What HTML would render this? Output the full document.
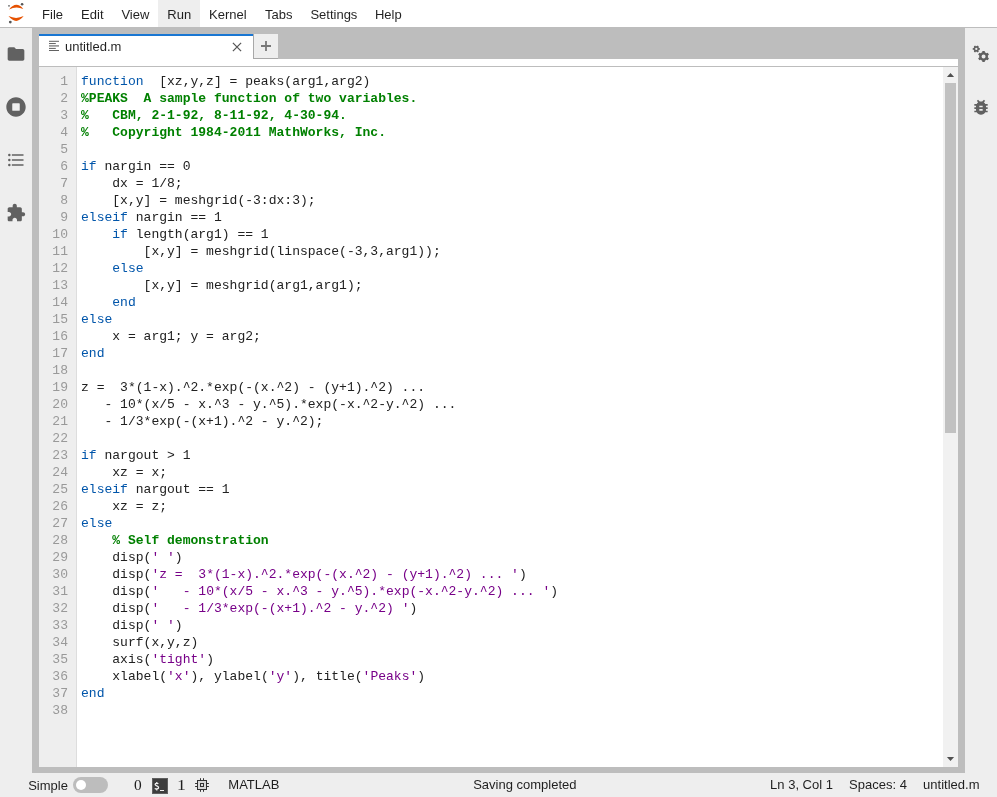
<!DOCTYPE html>
<html>
<head>
<meta charset="utf-8">
<style>
html,body{margin:0;padding:0;}
body{width:997px;height:797px;overflow:hidden;position:relative;will-change:transform;background:#eeeeee;font-family:"Liberation Sans",sans-serif;font-size:13px;color:#212121;}
.abs{position:absolute;}
#top{left:0;top:0;width:997px;height:27px;background:#ffffff;border-bottom:1px solid #bdbdbd;}
.mi{position:absolute;top:1px;height:27px;line-height:27px;font-size:13px;color:rgba(0,0,0,0.87);white-space:nowrap;}
#runbg{left:158px;top:0;width:42px;height:27px;background:#eeeeee;}
#lsb{left:0;top:28px;width:32px;height:745px;background:#eeeeee;}
#main{left:32px;top:28px;width:933px;height:745px;background:#bdbdbd;}
#rsb{left:965px;top:28px;width:32px;height:745px;background:#eeeeee;}
#status{left:0;top:773px;width:997px;height:24px;background:#eeeeee;}
.st{position:absolute;top:1px;height:24px;line-height:24px;font-size:13px;color:rgba(0,0,0,0.87);white-space:nowrap;}
#tab{left:39px;top:34px;width:214px;height:25px;background:#ffffff;}
#tabblue{left:39px;top:34px;width:214px;height:2px;background:#1976d2;}
#plus{left:253px;top:34px;width:24px;height:24px;background:#eeeeee;border-left:1px solid #a8a8a8;border-bottom:1px solid #a8a8a8;}
#toolbar{left:39px;top:59px;width:919px;height:7px;background:#ffffff;border-bottom:1px solid #bdbdbd;}
#editor{left:39px;top:67px;width:919px;height:700px;background:#ffffff;overflow:hidden;}
#gutter{left:0;top:0;width:37px;height:700px;background:#eeeeee;border-right:1px solid #dddddd;}
#sb{left:904px;top:0;width:15px;height:700px;background:#f1f1f1;}
#thumb{left:2px;top:16px;width:11px;height:350px;background:#c1c1c1;}
.ln{position:absolute;left:0;width:29px;text-align:right;height:17px;line-height:17px;font-family:"Liberation Mono",monospace;font-size:13.04px;color:#999999;}
#code{position:absolute;left:42px;top:6px;font-family:"Liberation Mono",monospace;font-size:13.04px;line-height:17px;color:#212121;white-space:normal;}
#code div{height:17px;white-space:pre;}
.k{color:#0055aa;}
.c{color:#008000;font-weight:bold;}
.s{color:#770088;}
svg{position:absolute;overflow:visible;}
</style>
</head>
<body>
<div id="top" class="abs">
  <div id="runbg" class="abs"></div>
  <svg style="left:0;top:0" width="32" height="27" viewBox="0 0 32 27">
    <path d="M9.1 9.4 Q16.2 0.4 23.3 9.0 Q16.2 5.8 9.1 9.4 Z" fill="#e65100"/>
    <path d="M8.5 16.1 Q16.1 25.7 23.7 16.1 Q16.1 19.7 8.5 16.1 Z" fill="#e65100"/>
    <circle cx="22.1" cy="4.2" r="1.3" fill="#555555"/>
    <circle cx="9" cy="5.8" r="0.9" fill="#666666"/>
    <circle cx="10.3" cy="22.1" r="1.4" fill="#555555"/>
  </svg>
  <span class="mi" style="left:42.1px">File</span>
  <span class="mi" style="left:81.1px">Edit</span>
  <span class="mi" style="left:121.4px">View</span>
  <span class="mi" style="left:167.3px">Run</span>
  <span class="mi" style="left:209.0px">Kernel</span>
  <span class="mi" style="left:265.1px">Tabs</span>
  <span class="mi" style="left:310.4px">Settings</span>
  <span class="mi" style="left:374.9px">Help</span>
</div>

<div id="lsb" class="abs"></div>
<div id="main" class="abs"></div>
<div id="rsb" class="abs"></div>

<!-- left sidebar icons -->
<svg style="left:6px;top:43.5px" width="20" height="20" viewBox="0 0 24 24"><path fill="#616161" d="M10 4H4c-1.1 0-1.99.9-1.99 2L2 18c0 1.1.9 2 2 2h16c1.1 0 2-.9 2-2V8c0-1.1-.9-2-2-2h-8l-2-2z"/></svg>
<svg style="left:6px;top:96.5px" width="20" height="20" viewBox="0 0 512 512"><path fill="#616161" d="M256 8C119 8 8 119 8 256s111 248 248 248 248-111 248-248S393 8 256 8zm96 328c0 8.8-7.2 16-16 16H176c-8.8 0-16-7.2-16-16V176c0-8.8 7.2-16 16-16h160c8.8 0 16 7.2 16 16v160z"/></svg>
<svg style="left:6px;top:149.5px" width="20" height="20" viewBox="0 0 24 24"><path fill="#616161" d="M7,5H21V7H7V5M7,13V11H21V13H7M4,4.5A1.5,1.5 0 0,1 5.5,6A1.5,1.5 0 0,1 4,7.5A1.5,1.5 0 0,1 2.5,6A1.5,1.5 0 0,1 4,4.5M4,10.5A1.5,1.5 0 0,1 5.5,12A1.5,1.5 0 0,1 4,13.5A1.5,1.5 0 0,1 2.5,12A1.5,1.5 0 0,1 4,10.5M7,19V17H21V19H7M4,16.5A1.5,1.5 0 0,1 5.5,18A1.5,1.5 0 0,1 4,19.5A1.5,1.5 0 0,1 2.5,18A1.5,1.5 0 0,1 4,16.5Z"/></svg>
<svg style="left:6px;top:203px" width="20" height="20" viewBox="0 0 24 24"><path fill="#616161" d="M20.5 11H19V7c0-1.1-.9-2-2-2h-4V3.5C13 2.12 11.88 1 10.5 1S8 2.12 8 3.5V5H4c-1.1 0-1.99.9-1.99 2v3.8H3.5c1.49 0 2.7 1.21 2.7 2.7s-1.21 2.7-2.7 2.7H2V20c0 1.1.9 2 2 2h3.8v-1.5c0-1.49 1.21-2.7 2.7-2.7 1.49 0 2.7 1.21 2.7 2.7V22H17c1.1 0 2-.9 2-2v-4h1.5c1.38 0 2.5-1.12 2.5-2.5S21.88 11 20.5 11z"/></svg>

<!-- tab bar -->
<div id="tab" class="abs"></div>
<div id="tabblue" class="abs"></div>
<svg style="left:48px;top:40px" width="12" height="12" viewBox="0 0 12 12">
  <rect x="1" y="0.8" width="10" height="1" fill="#616161"/>
  <rect x="1" y="3.05" width="6.8" height="1" fill="#616161"/>
  <rect x="1" y="5.15" width="10" height="1.5" fill="#8a8a8a"/>
  <rect x="1" y="7.9" width="6.8" height="1" fill="#616161"/>
  <rect x="1" y="10.0" width="10" height="1" fill="#616161"/>
</svg>
<span class="abs" style="left:65px;top:34px;height:25px;line-height:25px;font-size:13px;color:rgba(0,0,0,0.87)">untitled.m</span>
<svg style="left:232px;top:42px" width="10" height="10" viewBox="0 0 10 10"><path d="M0.9 0.9L9.1 9.1M9.1 0.9L0.9 9.1" stroke="#555555" stroke-width="1.25"/></svg>
<div id="plus" class="abs"></div>
<svg style="left:261px;top:41px" width="10" height="10" viewBox="0 0 10 10"><path d="M0 5H10M5 0V10" stroke="#777777" stroke-width="1.8"/></svg>

<div id="toolbar" class="abs"></div>

<div id="editor" class="abs">
  <div id="gutter" class="abs"></div>
  <div id="lns" style="position:absolute;left:0;top:6px"><div class="ln" style="top:0px">1</div><div class="ln" style="top:17px">2</div><div class="ln" style="top:34px">3</div><div class="ln" style="top:51px">4</div><div class="ln" style="top:68px">5</div><div class="ln" style="top:85px">6</div><div class="ln" style="top:102px">7</div><div class="ln" style="top:119px">8</div><div class="ln" style="top:136px">9</div><div class="ln" style="top:153px">10</div><div class="ln" style="top:170px">11</div><div class="ln" style="top:187px">12</div><div class="ln" style="top:204px">13</div><div class="ln" style="top:221px">14</div><div class="ln" style="top:238px">15</div><div class="ln" style="top:255px">16</div><div class="ln" style="top:272px">17</div><div class="ln" style="top:289px">18</div><div class="ln" style="top:306px">19</div><div class="ln" style="top:323px">20</div><div class="ln" style="top:340px">21</div><div class="ln" style="top:357px">22</div><div class="ln" style="top:374px">23</div><div class="ln" style="top:391px">24</div><div class="ln" style="top:408px">25</div><div class="ln" style="top:425px">26</div><div class="ln" style="top:442px">27</div><div class="ln" style="top:459px">28</div><div class="ln" style="top:476px">29</div><div class="ln" style="top:493px">30</div><div class="ln" style="top:510px">31</div><div class="ln" style="top:527px">32</div><div class="ln" style="top:544px">33</div><div class="ln" style="top:561px">34</div><div class="ln" style="top:578px">35</div><div class="ln" style="top:595px">36</div><div class="ln" style="top:612px">37</div><div class="ln" style="top:629px">38</div></div>
  <div id="code">
<div><span class="k">function</span>  [xz,y,z] = peaks(arg1,arg2)</div>
<div><span class="c">%PEAKS  A sample function of two variables.</span></div>
<div><span class="c">%   CBM, 2-1-92, 8-11-92, 4-30-94.</span></div>
<div><span class="c">%   Copyright 1984-2011 MathWorks, Inc.</span></div>
<div></div>
<div><span class="k">if</span> nargin == 0</div>
<div>    dx = 1/8;</div>
<div>    [x,y] = meshgrid(-3:dx:3);</div>
<div><span class="k">elseif</span> nargin == 1</div>
<div>    <span class="k">if</span> length(arg1) == 1</div>
<div>        [x,y] = meshgrid(linspace(-3,3,arg1));</div>
<div>    <span class="k">else</span></div>
<div>        [x,y] = meshgrid(arg1,arg1);</div>
<div>    <span class="k">end</span></div>
<div><span class="k">else</span></div>
<div>    x = arg1; y = arg2;</div>
<div><span class="k">end</span></div>
<div></div>
<div>z =  3*(1-x).^2.*exp(-(x.^2) - (y+1).^2) ...</div>
<div>   - 10*(x/5 - x.^3 - y.^5).*exp(-x.^2-y.^2) ...</div>
<div>   - 1/3*exp(-(x+1).^2 - y.^2);</div>
<div></div>
<div><span class="k">if</span> nargout &gt; 1</div>
<div>    xz = x;</div>
<div><span class="k">elseif</span> nargout == 1</div>
<div>    xz = z;</div>
<div><span class="k">else</span></div>
<div>    <span class="c">% Self demonstration</span></div>
<div>    disp(<span class="s">' '</span>)</div>
<div>    disp(<span class="s">'z =  3*(1-x).^2.*exp(-(x.^2) - (y+1).^2) ... '</span>)</div>
<div>    disp(<span class="s">'   - 10*(x/5 - x.^3 - y.^5).*exp(-x.^2-y.^2) ... '</span>)</div>
<div>    disp(<span class="s">'   - 1/3*exp(-(x+1).^2 - y.^2) '</span>)</div>
<div>    disp(<span class="s">' '</span>)</div>
<div>    surf(x,y,z)</div>
<div>    axis(<span class="s">'tight'</span>)</div>
<div>    xlabel(<span class="s">'x'</span>), ylabel(<span class="s">'y'</span>), title(<span class="s">'Peaks'</span>)</div>
<div><span class="k">end</span></div>
<div></div>
  </div>
  <div id="sb" class="abs">
    <div id="thumb" class="abs"></div>
  </div>
</div>

<div id="status" class="abs">
  <span class="st" style="left:28.2px">Simple</span>
  <div class="abs" style="left:73px;top:4px;width:35px;height:16px;border-radius:8px;background:#bdbdbd"></div>
  <div class="abs" style="left:75.7px;top:6.8px;width:10.4px;height:10.4px;border-radius:50%;background:#ffffff"></div>
  <span class="st" style="left:133.6px;top:1px;font-family:'Liberation Serif',serif;font-size:14px;transform:scaleX(1.1);transform-origin:0 0">0</span>
  <div class="abs" style="left:152px;top:5px;width:14px;height:14px;background:#3d3d3d;border:1px solid #5f5f5f"></div>
  
  <div class="abs" style="left:160px;top:17px;width:4px;height:1.2px;background:#eeeeee"></div>
  <span class="st" style="left:177.3px;top:1px;font-family:'Liberation Serif',serif;font-size:14px;transform:scaleX(1.25);transform-origin:0 0">1</span>
    <span class="st" style="left:228.3px;top:0">MATLAB</span>
  <span class="st" style="left:473.2px;top:0">Saving completed</span>
  <span class="st" style="left:770.1px;top:0">Ln 3, Col 1</span>
  <span class="st" style="left:849.1px;top:0">Spaces: 4</span>
  <span class="st" style="left:923.1px;top:0">untitled.m</span>
</div>
<svg style="left:0;top:0" width="997" height="797" viewBox="0 0 997 797">
  <path d="M158.4 783.9C157.6 783.1 155.1 783.0 155.1 784.6C155.1 786.1 158.6 785.6 158.6 787.4C158.6 789.3 155.7 789.3 154.8 788.3M156.8 781.9V783.3M156.8 789.2V790.5" fill="none" stroke="#f0f0f0" stroke-width="1.25"/>
  <rect x="197.5" y="780.5" width="9" height="9" fill="#d9d9d9" stroke="#333333" stroke-width="1"/>
  <rect x="200.5" y="783.5" width="3" height="3" fill="#d9d9d9" stroke="#333333" stroke-width="1"/>
  <path d="M200.5 778.2V780.5M203.5 778.2V780.5M200.5 789.5V791.8M203.5 789.5V791.8M195.1 783.5H197.5M195.1 786.5H197.5M206.5 783.5H208.9M206.5 786.5H208.9" stroke="#333333" stroke-width="1"/>
</svg>
<svg style="left:0;top:0" width="997" height="797" viewBox="0 0 997 797">
<path fill="#505050" d="M946.9 77L954.1 77L950.5 72.9Z"/><path fill="#505050" d="M946.9 757L954.1 757L950.5 761.1Z"/>
<path fill="#616161" fill-rule="evenodd" d="M978.72 47.50L978.97 48.07L979.92 48.13L979.92 49.67L978.97 49.73L978.72 50.30L978.36 50.80L978.78 51.65L977.44 52.42L976.92 51.63L976.30 51.70L975.68 51.63L975.16 52.42L973.82 51.65L974.24 50.80L973.88 50.30L973.63 49.73L972.68 49.67L972.68 48.13L973.63 48.07L973.88 47.50L974.24 47.00L973.82 46.15L975.16 45.38L975.68 46.17L976.30 46.10L976.92 46.17L977.44 45.38L978.78 46.15L978.36 47.00ZM977.45 48.90A1.15 1.15 0 1 0 975.15 48.90A1.15 1.15 0 1 0 977.45 48.90Z"/>
<path fill="#616161" fill-rule="evenodd" d="M987.95 56.50L987.84 57.47L988.97 58.26L987.79 60.31L986.54 59.73L985.75 60.31L984.85 60.70L984.74 62.08L982.36 62.08L982.25 60.70L981.35 60.31L980.56 59.73L979.31 60.31L978.13 58.26L979.26 57.47L979.15 56.50L979.26 55.53L978.13 54.74L979.31 52.69L980.56 53.27L981.35 52.69L982.25 52.30L982.36 50.92L984.74 50.92L984.85 52.30L985.75 52.69L986.54 53.27L987.79 52.69L988.97 54.74L987.84 55.53ZM985.55 56.50A2.0 2.0 0 1 0 981.55 56.50A2.0 2.0 0 1 0 985.55 56.50Z"/>
<g transform="translate(971,97.3) scale(0.8333)"><path fill="#616161" d="M20 8h-2.81c-.45-.78-1.07-1.45-1.82-1.96L17 4.41 15.59 3l-2.17 2.17C12.96 5.06 12.49 5 12 5c-.49 0-.96.06-1.41.17L8.41 3 7 4.41l1.62 1.63C7.88 6.55 7.26 7.22 6.81 8H4v2h2.090c-.05.33-.09.66-.09 1v1H4v2h2v1c0 .34.04.67.09 1H4v2h2.81c1.04 1.79 2.97 3 5.190 3s4.15-1.21 5.19-3H20v-2h-2.09c.05-.33.09-.66.09-1v-1h2v-2h-2v-1c0-.34-.04-.67-.09-1H20V8zm-6 8h-4v-2h4v2zm0-4h-4v-2h4v2z"/></g>
</svg>
</body>
</html>
